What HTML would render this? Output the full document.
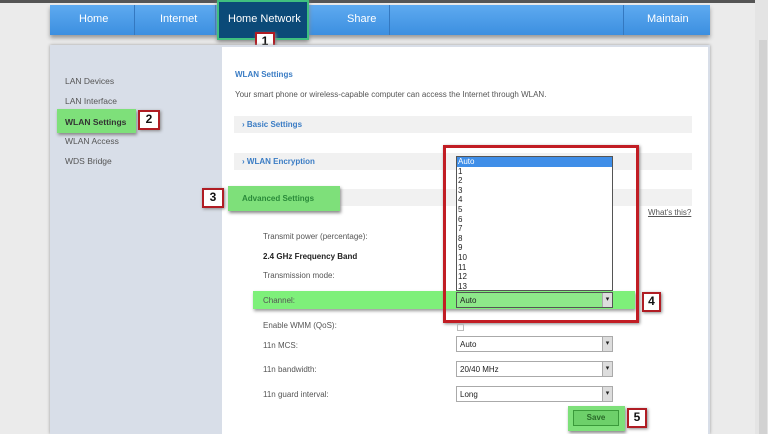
<!DOCTYPE html>
<html><head><style>
*{margin:0;padding:0;box-sizing:border-box}
body{width:768px;height:434px;overflow:hidden;background:#ebebeb;font-family:"Liberation Sans",sans-serif;position:relative}
.a{position:absolute}
.nav{left:50px;top:5px;width:660px;height:30px;background:linear-gradient(#5eaaf0,#3c8fe0);box-shadow:0 3px 4px #999}
.nt{position:absolute;top:8px;color:#fff;font-size:11px}
.dv{position:absolute;top:0;width:1px;height:30px;background:#3478c0}
.badge{position:absolute;background:#fff;border:2px solid #b01d24;font-weight:bold;font-size:12px;text-align:center;color:#111;box-shadow:1px 1px 3px #888}
.lab{position:absolute;font-size:8px;color:#555}
.sel{position:absolute;left:456px;width:157px;height:16px;border:1px solid #aaa;background:#fff;font-size:8px;padding:3px 0 0 3px;color:#222}
.sel:after{content:"▾";position:absolute;right:0;top:0;width:9px;height:14px;background:#ddd;border-left:1px solid #aaa;font-size:7px;text-align:center;line-height:14px}
.bar{position:absolute;left:234px;width:458px;height:17px;background:#f1f1f1;font-size:8px;font-weight:bold;color:#3a7cc4;padding:4px 0 0 8px}
.li{position:absolute;left:65px;font-size:8.5px;color:#555}
</style></head><body>
<div class="a" style="left:0;top:0;width:768px;height:3px;background:#555"></div>
<div class="a nav">
<div class="nt" style="left:29px">Home</div>
<div class="dv" style="left:84px"></div>
<div class="nt" style="left:110px">Internet</div>
<div class="dv" style="left:165px"></div>
<div class="nt" style="left:297px">Share</div>
<div class="dv" style="left:339px"></div>
<div class="dv" style="left:573px"></div>
<div class="nt" style="left:597px">Maintain</div>
</div>
<div class="a" style="left:217px;top:0;width:92px;height:40px;background:#0b4a78;border:2px solid #3fbf7f;box-shadow:0 2px 4px #888"></div>
<div class="a" style="left:228px;top:13px;color:#fff;font-size:11px">Home Network</div>
<div class="badge" style="left:255px;top:32px;width:20px;height:19px">1</div>
<div class="a" style="left:50px;top:45px;width:660px;height:389px;background:#d8dee8;box-shadow:0 0 3px #999"></div>
<div class="a" style="left:222px;top:47px;width:486px;height:387px;background:#fff"></div>
<div class="a" style="left:755px;top:0;width:13px;height:434px;background:#e4e4e4"></div>
<div class="a" style="left:759px;top:40px;width:8px;height:394px;background:#d2d2d2"></div>
<div class="li" style="top:76px">LAN Devices</div>
<div class="li" style="top:96px">LAN Interface</div>
<div class="a" style="left:57px;top:109px;width:79px;height:24px;background:#7ee07a;box-shadow:1px 2px 3px #888"></div>
<div class="li" style="top:117px;font-weight:bold;color:#333">WLAN Settings</div>
<div class="badge" style="left:138px;top:110px;width:22px;height:20px">2</div>
<div class="li" style="top:136px">WLAN Access</div>
<div class="li" style="top:156px">WDS Bridge</div>
<div class="a" style="left:235px;top:70px;font-size:8px;font-weight:bold;color:#3a7cc4">WLAN Settings</div>
<div class="a" style="left:235px;top:90px;font-size:8px;color:#555">Your smart phone or wireless-capable computer can access the Internet through WLAN.</div>
<div class="bar" style="top:116px">› Basic Settings</div>
<div class="bar" style="top:153px">› WLAN Encryption</div>
<div class="bar" style="top:189px"></div>
<div class="a" style="left:228px;top:186px;width:112px;height:25px;background:#7ee07a;box-shadow:1px 2px 3px #888;font-size:8px;font-weight:bold;color:#2a8a3a;padding:8px 0 0 14px">Advanced Settings</div>
<div class="badge" style="left:202px;top:188px;width:22px;height:20px">3</div>
<div class="a" style="left:648px;top:208px;font-size:8px;color:#555;text-decoration:underline">What's this?</div>
<div class="lab" style="left:263px;top:232px">Transmit power (percentage):</div>
<div class="lab" style="left:263px;top:252px;font-weight:bold;color:#222">2.4 GHz Frequency Band</div>
<div class="lab" style="left:263px;top:271px">Transmission mode:</div>
<div class="a" style="left:253px;top:291px;width:382px;height:18px;background:#7ef07a;box-shadow:1px 2px 3px #999"></div>
<div class="lab" style="left:263px;top:296px">Channel:</div>
<div class="sel" style="top:292px;background:#8ee88a;border-color:#555">Auto</div>
<div class="a" style="left:456px;top:156px;width:157px;height:135px;background:#fff;border:1px solid #555;font-size:8px;line-height:9.6px;color:#222">
<div style="background:#3f8ee8;color:#fff;padding-left:1px">Auto</div>
<div style="padding-left:1px">1<br>2<br>3<br>4<br>5<br>6<br>7<br>8<br>9<br>10<br>11<br>12<br>13</div></div>
<div class="a" style="left:443px;top:145px;width:196px;height:178px;border:3px solid #c11d24;box-shadow:1px 1px 3px #888"></div>
<div class="badge" style="left:642px;top:292px;width:19px;height:20px">4</div>
<div class="lab" style="left:263px;top:321px">Enable WMM (QoS):</div>
<div class="a" style="left:457px;top:324px;width:7px;height:7px;border:1px solid #bbb"></div>
<div class="lab" style="left:263px;top:341px">11n MCS:</div>
<div class="sel" style="top:336px">Auto</div>
<div class="lab" style="left:263px;top:365px">11n bandwidth:</div>
<div class="sel" style="top:361px">20/40 MHz</div>
<div class="lab" style="left:263px;top:390px">11n guard interval:</div>
<div class="sel" style="top:386px">Long</div>
<div class="a" style="left:568px;top:406px;width:57px;height:25px;background:#7ee07a;box-shadow:1px 2px 3px #888"></div>
<div class="a" style="left:573px;top:410px;width:46px;height:16px;background:#6dd06a;border:1px solid #3a9a3a;font-size:8px;font-weight:bold;color:#2a6a2a;text-align:center;line-height:14px">Save</div>
<div class="badge" style="left:627px;top:408px;width:20px;height:20px">5</div>
</body></html>
